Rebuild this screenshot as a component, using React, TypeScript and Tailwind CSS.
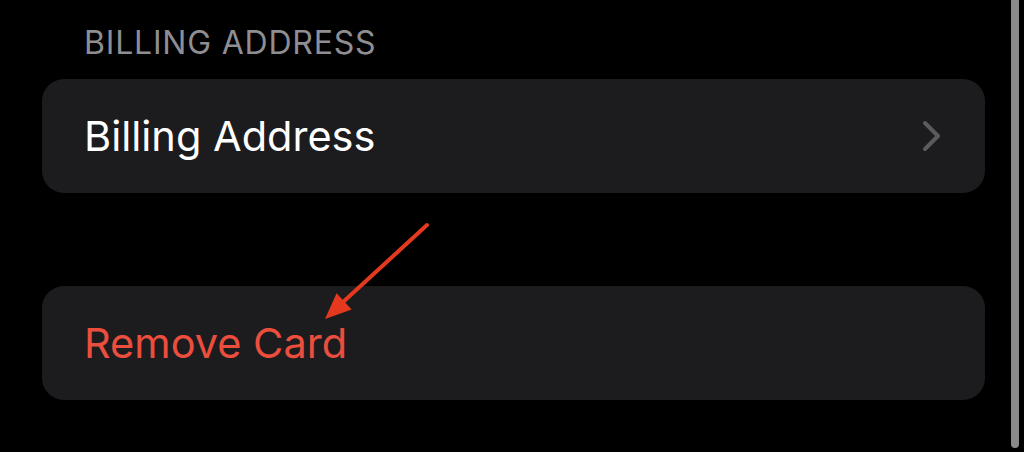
import React from "react";

const FONT = { fontFamily: "Inter, 'Noto Sans', 'Liberation Sans', sans-serif" };

function Chevron(): React.JSX.Element {
  return (
    <svg width="20" height="32" viewBox="0 0 20 32" fill="none" className="shrink-0">
      <path
        d="M3 3 L16 16 L3 29"
        stroke="#5b5b5f"
        strokeWidth="4"
        strokeLinecap="round"
        strokeLinejoin="round"
      />
    </svg>
  );
}

function Row({
  children,
  trailing,
}: {
  readonly children: React.ReactNode;
  readonly trailing?: React.ReactNode;
}): React.JSX.Element {
  return (
    <div className="flex h-[114px] items-center justify-between rounded-[22px] bg-[#1c1c1e] pl-[42px] pr-[43px]">
      {children}
      {trailing}
    </div>
  );
}

// red annotation arrow drawn over the screenshot
function Arrow(): React.JSX.Element {
  return (
    <svg
      className="pointer-events-none absolute left-0 top-0"
      width="1024"
      height="452"
      viewBox="0 0 1024 452"
    >
      <line
        x1="427"
        y1="225"
        x2="342"
        y2="303"
        stroke="#e5391f"
        strokeWidth="4"
        strokeLinecap="round"
      />
      <polygon points="325,319 351.6,309.5 336.6,293.3" fill="#e5391f" />
    </svg>
  );
}

export default function App(): React.JSX.Element {
  return (
    <div className="relative h-[452px] w-[1024px] overflow-hidden bg-black" style={FONT}>
      <div className="w-[985px] pl-[42px] pt-[27px]">
        <div className="pl-[42px] text-[32px] leading-none tracking-[0.025em] text-[#8e8e93]">
          BILLING ADDRESS
        </div>
        <div className="mt-[20px]">
          <Row trailing={<Chevron />}>
            <span className="pt-[2px] text-[41.5px] leading-none text-white">Billing Address</span>
          </Row>
        </div>
        <div className="mt-[93px]">
          <Row>
            <span className="pt-[2px] text-[41.5px] leading-none text-[#eb4e3d]">Remove Card</span>
          </Row>
        </div>
      </div>
      <div className="absolute right-[5px] top-0 h-[448px] w-[8px] rounded-b-full bg-[#8a8a8a]" />
      <Arrow />
    </div>
  );
}
